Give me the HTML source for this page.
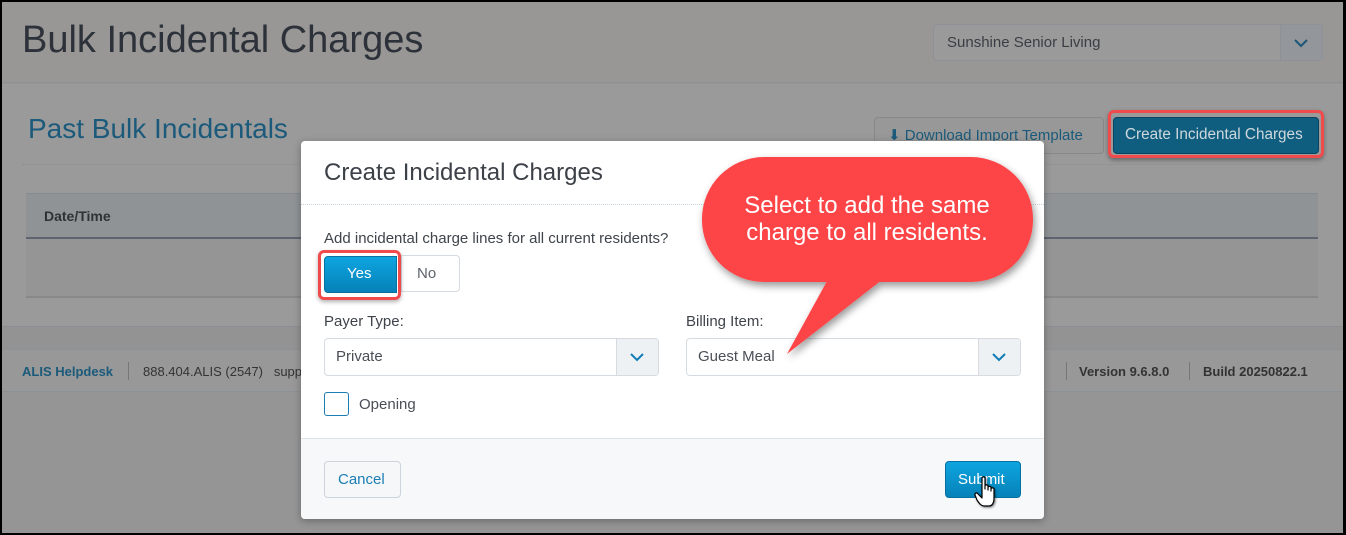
<!DOCTYPE html>
<html><head><style>
*{box-sizing:border-box;margin:0;padding:0}
body{width:1346px;height:535px;overflow:hidden;background:#000;font-family:"Liberation Sans",sans-serif;position:relative}
.abs{position:absolute}
#screen{left:2px;top:2px;width:1341px;height:531px;background:#959595;overflow:hidden}
</style></head><body>
<div id="screen" class="abs">
 <div class="abs" style="left:0;top:0;width:1341px;height:81px;background:#989795;border-bottom:1px solid #8c9196"></div>
 <div class="abs" style="left:20px;top:17px;font-size:38px;color:#2d3139">Bulk Incidental Charges</div>
 <div class="abs" style="left:931px;top:22px;width:390px;height:37px;border:1px solid #8e9296;border-radius:4px;background:#9a9a9a"></div>
 <div class="abs" style="left:1278px;top:23px;width:42px;height:35px;border-left:1px solid #8e9296;background:#93979b;border-radius:0 4px 4px 0"></div>
 <svg class="abs" style="left:1291px;top:35px" width="16" height="12"><path d="M2 3 L8 9 L14 3" fill="none" stroke="#1b5677" stroke-width="2"/></svg>
 <div class="abs" style="left:945px;top:32px;font-size:15px;color:#3a3e44">Sunshine Senior Living</div>
 <div class="abs" style="left:0;top:82px;width:1341px;height:242px;background:#9a9a9a"></div>
 <div class="abs" style="left:26px;top:111px;font-size:28px;color:#1b5a7a">Past Bulk Incidentals</div>
 <div class="abs" style="left:20px;top:162px;width:1296px;border-top:1px dotted #8a8f94"></div>
 <div class="abs" style="left:872px;top:115px;width:230px;height:37px;border:1px solid #86898c;border-radius:4px;background:#989898"></div>
 <div class="abs" style="left:886px;top:124px;font-size:15px;color:#1b5a7a">⬇ Download Import Template</div>
 <div class="abs" style="left:1106px;top:108px;width:216px;height:48px;border:3px solid #f04a4c;border-radius:6px;box-shadow:0 2px 4px rgba(0,0,0,.35)"></div>
 <div class="abs" style="left:1111px;top:115px;width:206px;height:37px;border-radius:4px;background:#0f5d7f;border:1px solid #0b4461"></div>
 <div class="abs" style="left:1123px;top:124px;font-size:15.3px;color:#cfd8dd">Create Incidental Charges</div>
 <div class="abs" style="left:24px;top:191px;width:1292px;height:46px;background:#8f9396;border-top:1px solid #868b90;border-bottom:2px solid #5d6470"></div>
 <div class="abs" style="left:42px;top:206px;font-size:14px;font-weight:bold;color:#2e3237">Date/Time</div>
 <div class="abs" style="left:24px;top:237px;width:1292px;height:59px;background:#959595;border-bottom:2px solid #898989"></div>
 <div class="abs" style="left:0;top:324px;width:1341px;height:23px;background:#939393;border-top:1px solid #8b8f93"></div>
 <div class="abs" style="left:0;top:347px;width:1341px;height:43px;background:#989898;border-top:1px solid #8c9196;border-bottom:1px solid #8c9196"></div>
 <div class="abs" style="left:20px;top:362px;font-size:13px;font-weight:bold;color:#1b5a7a">ALIS Helpdesk</div>
 <div class="abs" style="left:126px;top:360px;height:18px;border-left:1px solid #777"></div>
 <div class="abs" style="left:141px;top:362px;font-size:13px;color:#333">888.404.ALIS (2547)&nbsp;&nbsp; support</div>
 <div class="abs" style="left:1064px;top:360px;height:18px;border-left:1px solid #777"></div>
 <div class="abs" style="left:1077px;top:362px;font-size:13px;font-weight:bold;color:#333">Version 9.6.8.0</div>
 <div class="abs" style="left:1187px;top:360px;height:18px;border-left:1px solid #777"></div>
 <div class="abs" style="left:1201px;top:362px;font-size:13px;font-weight:bold;color:#333">Build 20250822.1</div>

 <!-- modal -->
 <div class="abs" style="left:299px;top:139px;width:743px;height:378px;background:#fff;border-radius:4px;overflow:hidden;box-shadow:0 2px 8px rgba(0,0,0,.3)">
  <div class="abs" style="left:23px;top:18px;font-size:24px;color:#3c4148">Create Incidental Charges</div>
  <div class="abs" style="left:0;top:63px;width:743px;border-top:1px dotted #c9d3dc"></div>
  <div class="abs" style="left:23px;top:89px;font-size:15px;color:#3f444b">Add incidental charge lines for all current residents?</div>
  <div class="abs" style="left:100px;top:114px;width:59px;height:37px;border:1px solid #d5dbe0;border-radius:0 4px 4px 0"></div>
  <div class="abs" style="left:116px;top:124px;font-size:15px;color:#5d636b">No</div>
  <div class="abs" style="left:17px;top:109px;width:83px;height:50px;border:3px solid #f04a4c;border-radius:6px;box-shadow:0 2px 4px rgba(0,0,0,.3)"></div>
  <div class="abs" style="left:23px;top:115px;width:73px;height:37px;border-radius:4px 0 0 4px;background:linear-gradient(#0ea5e0,#0682b8);border:1px solid #0770a3"></div>
  <div class="abs" style="left:46px;top:124px;font-size:15px;color:#fff">Yes</div>
  <div class="abs" style="left:23px;top:172px;font-size:15px;color:#3f444b">Payer Type:</div>
  <div class="abs" style="left:23px;top:197px;width:335px;height:38px;border:1px solid #d5dbe0;border-radius:4px"></div>
  <div class="abs" style="left:315px;top:198px;width:42px;height:36px;background:#eef1f4;border-left:1px solid #d5dbe0;border-radius:0 4px 4px 0"></div>
  <svg class="abs" style="left:328px;top:210px" width="16" height="12"><path d="M2 3 L8 9 L14 3" fill="none" stroke="#0f7cb5" stroke-width="2"/></svg>
  <div class="abs" style="left:35px;top:207px;font-size:15px;color:#4a4f56">Private</div>
  <div class="abs" style="left:385px;top:172px;font-size:15px;color:#3f444b">Billing Item:</div>
  <div class="abs" style="left:385px;top:197px;width:335px;height:38px;border:1px solid #d5dbe0;border-radius:4px"></div>
  <div class="abs" style="left:677px;top:198px;width:42px;height:36px;background:#eef1f4;border-left:1px solid #d5dbe0;border-radius:0 4px 4px 0"></div>
  <svg class="abs" style="left:690px;top:210px" width="16" height="12"><path d="M2 3 L8 9 L14 3" fill="none" stroke="#0f7cb5" stroke-width="2"/></svg>
  <div class="abs" style="left:397px;top:207px;font-size:15px;color:#4a4f56">Guest Meal</div>
  <div class="abs" style="left:23px;top:251px;width:25px;height:24px;border:1px solid #1a7db3;border-radius:3px"></div>
  <div class="abs" style="left:58px;top:255px;font-size:15px;color:#4a4f56">Opening</div>
  <div class="abs" style="left:0;top:297px;width:743px;height:81px;background:#f7f8fa;border-top:1px solid #dde3e8"></div>
  <div class="abs" style="left:23px;top:320px;width:77px;height:37px;border:1px solid #ccd3da;border-radius:4px;background:#f5f7f9"></div>
  <div class="abs" style="left:37px;top:330px;font-size:15px;color:#1a7db3">Cancel</div>
  <div class="abs" style="left:644px;top:320px;width:76px;height:37px;border-radius:4px;background:linear-gradient(#0ea5e0,#0682b8);border:1px solid #0770a3"></div>
  <div class="abs" style="left:657px;top:330px;font-size:15px;color:#fff">Submit</div>
  <svg class="abs" style="left:673px;top:335px" width="28" height="36"><path d="M8 2 C8 0.5 11 0.5 11 2 L11 13 L11 10 C11 8.5 14 8.5 14 10 L14 14 L14 11.5 C14 10 17 10 17 11.5 L17 15 L17 13 C17 11.5 20 11.5 20 13 L20 23 C20 27 18 30 15 30 L10 30 C7 30 5 27 3 24 L1 19 C0.5 17 3 16 4 18 L8 22 Z" fill="#fff" stroke="#000" stroke-width="1.2" stroke-linejoin="round" filter="drop-shadow(1px 1px 1px rgba(0,0,0,.5))"/></svg>
 </div>

 <!-- callout -->
 <svg class="abs" style="left:690px;top:150px;overflow:visible" width="360" height="220">
  <defs><filter id="s"><feDropShadow dx="2" dy="4" stdDeviation="4" flood-opacity=".4"/></filter></defs>
  <g filter="url(#s)" fill="#fd4447">
   <rect x="10" y="5" width="331" height="125" rx="62"/>
   <path d="M140 120 L200 120 L95 202 Z"/>
  </g>
  <text x="175" y="61" text-anchor="middle" font-family="Liberation Sans" font-size="24" fill="#fff">Select to add the same</text>
  <text x="175" y="88" text-anchor="middle" font-family="Liberation Sans" font-size="24" fill="#fff">charge to all residents.</text>
 </svg>
</div>
</body></html>
